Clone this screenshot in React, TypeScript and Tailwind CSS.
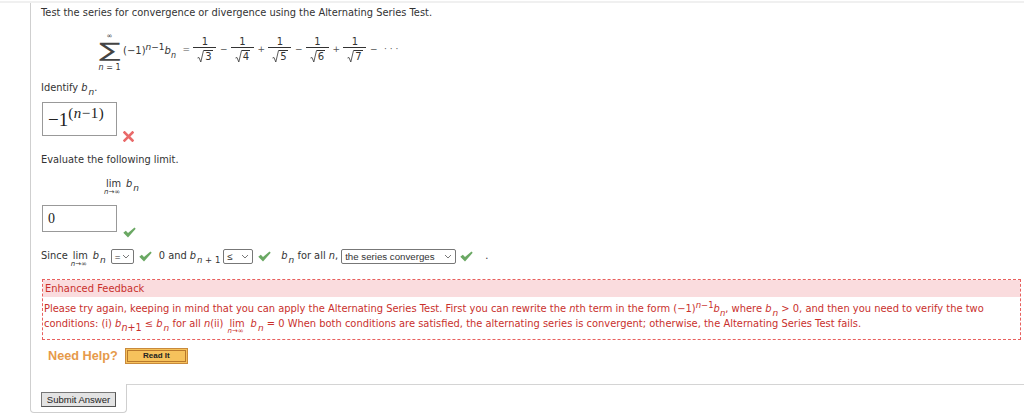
const font = "[font-family:'DejaVu_Sans',Verdana,sans-serif]";

function I({ children }: { children: React.ReactNode }) {
  return <i className="italic">{children}</i>;
}

function Frac({ d }: { d: string }) {
  return (
    <span className="inline-flex w-[23px] flex-col items-center text-[10px] leading-none">
      <span className="h-[11px] w-full border-b border-[#333] text-center leading-[10px]">1</span>
      <span className="mt-[2px] flex h-[13px] items-start">
        <svg width="7" height="13" viewBox="0 0 7 13" className="shrink-0">
          <path d="M0.5 8 L2 7.5 L3.8 12 L6.5 0.5 L7 0.5" fill="none" stroke="#333" strokeWidth="0.8" />
        </svg>
        <span className="border-t border-[#333] px-[1px] text-[10px] leading-[12px]">{d}</span>
      </span>
    </span>
  );
}

function Op({ c }: { c: string }) {
  return <span className="w-[14.5px] text-center text-[9px] text-[#555]">{c}</span>;
}

function Bn() {
  return (
    <span className="whitespace-nowrap">
      <I>b</I>
      <sub className="relative top-[4px] ml-[1px] align-baseline text-[9px] leading-none">
        <I>n</I>
      </sub>
    </span>
  );
}

function Check() {
  return (
    <svg width="13" height="11" viewBox="0 0 13 11" className="shrink-0">
      <path d="M0.3 5.8 L2.8 3.8 L5 6 L11.5 0.5 L12.7 1.8 L5 10.5 Z" fill="#6aa863" />
    </svg>
  );
}

function Cross() {
  return (
    <svg width="11" height="11" viewBox="0 0 11 11">
      <path d="M1.5 1.5 L9.5 9.5 M9.5 1.5 L1.5 9.5" stroke="#e96a6a" strokeWidth="2.6" strokeLinecap="square" />
    </svg>
  );
}

function Sel({ w, text, cls = "" }: { w: string; text: string; cls?: string }) {
  return (
    <span className={`inline-flex h-[15px] items-center justify-between rounded-[2px] border border-[#777] bg-white pl-[3px] pr-[3px] font-['Liberation_Sans',sans-serif] text-[9.7px] leading-none text-[#333] ${w} ${cls}`}>
      <span>{text}</span>
      <svg width="8" height="5" viewBox="0 0 8 5">
        <path d="M1 1 L4 4 L7 1" fill="none" stroke="#555" strokeWidth="0.8" />
      </svg>
    </span>
  );
}

function Lim({ cls }: { cls: string }) {
  return (
    <span className={`relative inline-block ${cls}`}>
      lim
      <span className="absolute -left-[2px] top-[12px] w-[24px] whitespace-nowrap text-[7px] leading-none">
        <I>n</I>→∞
      </span>
    </span>
  );
}

export default function App() {
  return (
    <div className={`flex h-[415px] w-[1024px] flex-col overflow-hidden bg-white text-[9.85px] text-[#333] ${font}`}>
      <div className="mt-[1px] h-[2px] w-full shrink-0 bg-[#f0f0f0]" />
      <div className="ml-[30px] flex h-[381px] shrink-0 flex-col border-l-[1.5px] border-[#cfcfcf] pl-[10px]">
        <div className="mt-[4px] h-[12px] leading-[12px]">Test the series for convergence or divergence using the Alternating Series Test.</div>

        <div className="ml-[58px] mt-[13px] flex h-[36px] items-center">
          <span className="relative mr-[3px] flex w-[21px] flex-col items-center">
            <span className="absolute -top-[9px] text-[7px] leading-none">∞</span>
            <span className="scale-x-[1.6] text-[20px] leading-[16px] text-[#444]">∑</span>
            <span className="absolute -bottom-[14px] whitespace-nowrap text-[8px] leading-none">
              <I>n</I> = 1
            </span>
          </span>
          <span className="mr-[3px] whitespace-nowrap text-[10px]">
            (−1)
            <sup className="relative -top-[4px] align-baseline text-[9px] leading-none">
              <I>n</I>−1
            </sup>
            <I>b</I>
            <sub className="relative top-[4px] align-baseline text-[8px] leading-none">
              <I>n</I>
            </sub>
          </span>
          <Op c="=" />
          <Frac d="3" />
          <Op c="−" />
          <Frac d="4" />
          <Op c="+" />
          <Frac d="5" />
          <Op c="−" />
          <Frac d="6" />
          <Op c="+" />
          <Frac d="7" />
          <Op c="−" />
          <span className="ml-[3px] text-[9px] text-[#555]">· · ·</span>
        </div>

        <div className="mt-[14px] flex h-[13px] items-center">
          Identify&nbsp;<Bn />.
        </div>

        <div className="ml-[1px] mt-[7px] flex h-[42px] shrink-0 items-start">
          <div className="flex h-[34px] w-[75px] items-center border border-[#999] pl-[5px] font-['Liberation_Serif',serif] text-[19px] leading-none text-[#222]">
            −1
            <span className="relative -top-[6px] text-[15px] tracking-[0.5px]">
              (<i>n</i>−1)
            </span>
          </div>
          <span className="ml-[6px] mt-[29px]">
            <Cross />
          </span>
        </div>

        <div className="mt-[10px] h-[12px] leading-[12px]">Evaluate the following limit.</div>

        <div className="ml-[65px] mt-[12px] flex h-[13px] items-center gap-[5px]">
          <Lim cls="" />
          <Bn />
        </div>

        <div className="ml-[1px] mt-[14px] flex h-[27px] shrink-0 items-start">
          <div className="flex h-[27px] w-[75px] items-center border border-[#999] pl-[5px] font-['Liberation_Serif',serif] text-[14px] leading-none text-[#222]">0</div>
          <span className="ml-[6px] mt-[22px]">
            <Check />
          </span>
        </div>

        <div className="mt-[17px] flex h-[15px] items-center whitespace-nowrap">
          <span>Since</span>
          <Lim cls="mx-[5px]" />
          <Bn />
          <Sel w="w-[23px]" text="=" cls="ml-[5px]" />
          <span className="ml-[5px]"><Check /></span>
          <span className="ml-[7px]">0 and&nbsp;</span>
          <span className="whitespace-nowrap">
            <I>b</I>
            <sub className="relative top-[4px] ml-[1px] align-baseline text-[8.5px] leading-none">
              <I>n</I> + 1
            </sub>
          </span>
          <Sel w="w-[30px]" text="≤" cls="ml-[3px]" />
          <span className="ml-[5px]"><Check /></span>
          <span className="ml-[10px]"><Bn /></span>
          <span>&nbsp;for all&nbsp;</span>
          <I>n</I>
          <span>,</span>
          <Sel w="w-[115px]" text="the series converges" cls="ml-[3px]" />
          <span className="ml-[4px]"><Check /></span>
          <span className="ml-[12px]">.</span>
        </div>

        <div className="ml-[1px] mt-[15px] h-[61px] w-[979px] shrink-0 border border-dashed border-[#e8605f] text-[9.92px] text-[#c9302c]">
          <div className="flex h-[17px] items-center bg-[#fadcde] pl-[2px] leading-none">Enhanced Feedback</div>
          <div className="pl-[1px] pt-[4px] leading-[15px]">
            <div className="whitespace-nowrap">
              Please try again, keeping in mind that you can apply the Alternating Series Test. First you can rewrite the <I>n</I>th term in the form (−1)
              <sup className="relative -top-[4px] align-baseline text-[8.5px] leading-none"><I>n</I>−1</sup>
              <I>b</I>
              <sub className="relative top-[4px] align-baseline text-[8.5px] leading-none"><I>n</I></sub>
              , where <Bn /> &gt; 0, and then you need to verify the two
            </div>
            <div className="whitespace-nowrap">
              conditions: (i) <I>b</I>
              <sub className="relative top-[4px] align-baseline text-[9.6px] leading-none"><I>n</I>+1</sub>
              {" "}≤ <Bn /> for all <I>n</I>(ii)
              <Lim cls="mx-[6px]" />
              <Bn /> = 0 When both conditions are satisfied, the alternating series is convergent; otherwise, the Alternating Series Test fails.
            </div>
          </div>
        </div>

        <div className="ml-[7px] mt-[8px] flex h-[16px] items-center">
          <span className="font-['Liberation_Sans',sans-serif] text-[12.7px] font-bold leading-none text-[#e69a4a]">Need Help?</span>
          <span className="ml-[7px] flex h-[16px] w-[63px] items-center justify-center border border-[#c98a3c] bg-[#f6c25c] font-['Liberation_Sans',sans-serif] text-[8px] font-bold leading-none text-[#222] shadow-[inset_0_0_0_1px_#f6c25c,inset_0_0_0_2px_#b9792c]">
            Read It
          </span>
        </div>
      </div>

      <div className="flex h-[30px] shrink-0">
        <div className="ml-[30px] flex h-[29px] w-[97px] shrink-0 items-start rounded-b-[4px] border-x-[1.5px] border-b-[1.5px] border-[#cfcfcf] pl-[10px] pt-[8px]">
          <span className="flex h-[15px] w-[75px] items-center justify-center border border-[#777] border-b-[#555] border-r-[#555] bg-[#e3e3e3] font-['Liberation_Sans',sans-serif] text-[9.5px] leading-none text-[#222]">
            Submit Answer
          </span>
        </div>
        <div className="h-[1px] flex-1 bg-[#d4d4d4]" />
      </div>
    </div>
  );
}
